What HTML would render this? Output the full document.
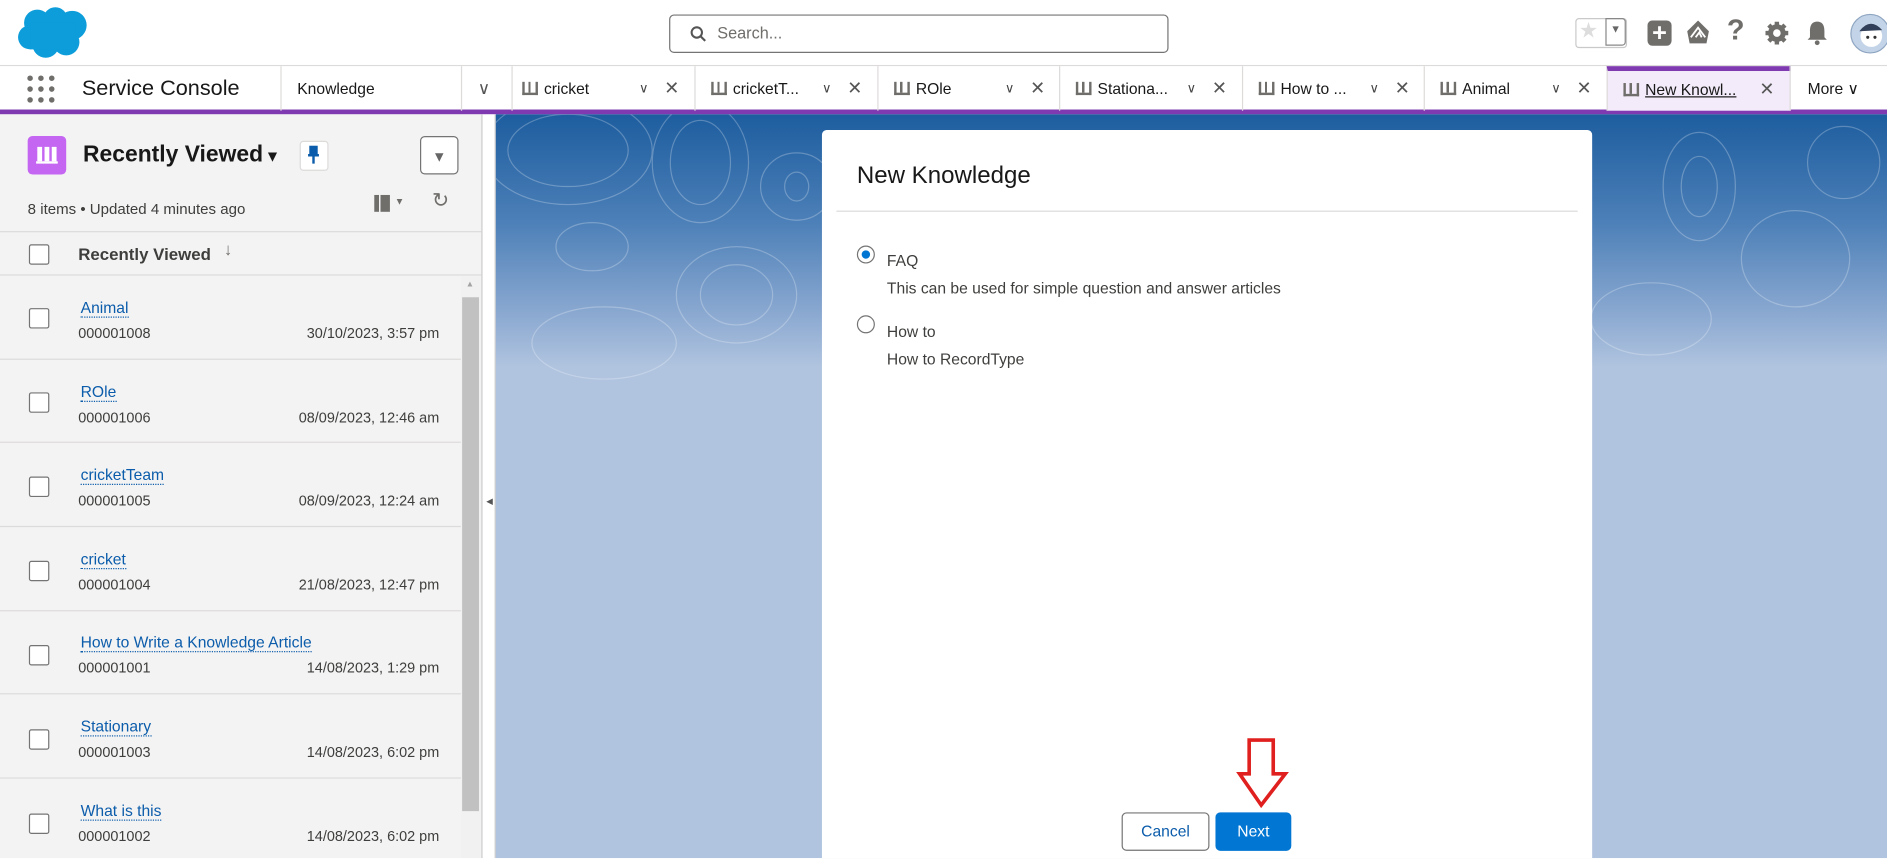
<!DOCTYPE html>
<html><head><meta charset="utf-8"><style>
html,body{margin:0;padding:0;width:1887px;height:858px;overflow:hidden;background:#fff;}
#w{position:absolute;left:0;top:0;width:1568px;height:713px;transform:scale(1.20344);transform-origin:0 0;font-family:"Liberation Sans",sans-serif;color:#181818;}
.a{position:absolute;}
.tab{position:absolute;top:55px;height:37px;border-left:1px solid #dddbda;font-size:13px;line-height:38px;color:#181818;}
.ti{display:inline-block;width:13px;height:11px;border:2px solid #706e6b;border-top:none;vertical-align:-1px;margin-right:5px;box-sizing:border-box;background:linear-gradient(90deg,transparent 3px,#706e6b 3px,#706e6b 5px,transparent 5px) ;}
.chev{position:absolute;top:0;font-size:11px;color:#444;}
.x{position:absolute;top:0;font-size:15px;color:#555;}
.row{position:absolute;left:0;width:383px;height:69px;border-bottom:1px solid #dddbda;}
.cb{position:absolute;left:24px;width:15px;height:15px;border:1px solid #747474;border-radius:2px;background:#fff;}
.nm{position:absolute;left:67px;font-size:13px;color:#0b5cab;border-bottom:1px dotted #0b5cab;line-height:15px;}
.id{position:absolute;left:65px;font-size:12px;color:#3e3e3c;}
.dt{position:absolute;right:18px;font-size:12px;color:#3e3e3c;}
</style></head><body><div id="w">
<!-- header -->
<div class="a" style="left:0;top:0;width:1568px;height:54px;background:#fff;border-bottom:1px solid #dddbda;"></div>
<svg class="a" style="left:13px;top:5px" width="62" height="44" viewBox="0 0 62 44"><g fill="#0d9dda"><circle cx="18" cy="14" r="11"/><circle cx="33" cy="11" r="10"/><circle cx="47" cy="16" r="12"/><circle cx="12" cy="26" r="10"/><circle cx="25" cy="32" r="11"/><circle cx="42" cy="30" r="11"/><rect x="12" y="14" width="38" height="22"/></g></svg>
<div class="a" style="left:556px;top:12px;width:413px;height:30px;border:1px solid #747474;border-radius:4px;background:#fff;"></div>
<svg class="a" style="left:573px;top:21px" width="14" height="14" viewBox="0 0 14 14"><circle cx="6" cy="6" r="4.3" fill="none" stroke="#555" stroke-width="1.7"/><path d="M9 9l4 4" stroke="#555" stroke-width="1.8"/></svg>
<div class="a" style="left:596px;top:20px;font-size:13.5px;color:#706e6b;">Search...</div>
<div class="a" style="left:1309px;top:15px;width:41px;height:23px;border:1px solid #c9c9c9;border-radius:3px;background:#fff;"></div>
<div class="a" style="left:1334px;top:15px;width:17px;height:23px;border:1px solid #888;border-radius:0 3px 3px 0;box-sizing:border-box;"></div>
<div class="a" style="left:1312px;top:15px;font-size:18px;color:#ddd;">★</div>
<div class="a" style="left:1338px;top:19px;font-size:9px;color:#666;">▼</div>
<div class="a" style="left:1369px;top:17px;width:20px;height:21px;background:#706e6b;border-radius:4px;color:#fff;font-size:21px;line-height:21px;text-align:center;font-weight:bold;">+</div>
<svg class="a" style="left:1401px;top:16px" width="20" height="22" viewBox="0 0 20 22"><path d="M10 1 L19 10 L17 20 L3 20 L1 10Z" fill="#706e6b"/><path d="M4 15 L10 7 L16 15 M8 15 L11 11 L13 15" stroke="#fff" stroke-width="1.5" fill="none"/></svg>
<div class="a" style="left:1435px;top:12px;font-size:24px;color:#706e6b;font-weight:bold;">?</div>
<svg class="a" style="left:1466px;top:17px" width="21" height="21" viewBox="0 0 20 20"><circle cx="10" cy="10" r="7" fill="#706e6b"/><g stroke="#706e6b" stroke-width="3.5"><path d="M10 1v18M1 10h18M3.6 3.6l12.8 12.8M16.4 3.6L3.6 16.4"/></g><circle cx="10" cy="10" r="3" fill="#fff"/></svg>
<svg class="a" style="left:1500px;top:16px" width="20" height="22" viewBox="0 0 20 22"><path d="M10 2 C5 2 4 6 4 10 L4 15 L2 17 L18 17 L16 15 L16 10 C16 6 15 2 10 2Z" fill="#706e6b"/><circle cx="10" cy="19.5" r="2" fill="#706e6b"/></svg>
<svg class="a" style="left:1537px;top:10px" width="32" height="36" viewBox="0 0 32 36"><circle cx="17" cy="18" r="16" fill="#c4d4e8" stroke="#8fa6c2"/><circle cx="18" cy="20" r="9" fill="#fff"/><path d="M8 16 Q17 4 27 15" fill="#32405a"/><circle cx="15" cy="21" r="1.3" fill="#333"/><circle cx="21" cy="21" r="1.3" fill="#333"/></svg>
<!-- nav -->
<div class="a" style="left:0;top:55px;width:1568px;height:37px;background:#fff;"></div>
<div class="a" style="left:0;top:91px;width:1568px;height:4px;background:#7f3ab1;"></div>
<svg class="a" style="left:22px;top:62px" width="24" height="24" viewBox="0 0 24 24"><g fill="#706e6b"><circle cx="3" cy="3" r="2.3"/><circle cx="12" cy="3" r="2.3"/><circle cx="21" cy="3" r="2.3"/><circle cx="3" cy="12" r="2.3"/><circle cx="12" cy="12" r="2.3"/><circle cx="21" cy="12" r="2.3"/><circle cx="3" cy="21" r="2.3"/><circle cx="12" cy="21" r="2.3"/><circle cx="21" cy="21" r="2.3"/></g></svg>
<div class="a" style="left:68px;top:63px;font-size:18px;color:#181818;">Service Console</div>
<div class="tab" style="left:233px;width:150px;"><span style="margin-left:13px">Knowledge</span></div>
<div class="tab" style="left:383px;width:42px;"><span style="position:absolute;left:13px;top:-1px;font-size:14px;color:#555;">∨</span></div>
<div class="tab" style="left:425px;width:152px;"><span style="margin-left:8px"><i class="ti"></i>cricket</span><span class="chev" style="left:105px">∨</span><span class="x" style="left:126px">✕</span></div>
<div class="tab" style="left:577px;width:152px;"><span style="margin-left:13px"><i class="ti"></i>cricketT...</span><span class="chev" style="left:105px">∨</span><span class="x" style="left:126px">✕</span></div>
<div class="tab" style="left:729px;width:151px;"><span style="margin-left:13px"><i class="ti"></i>ROle</span><span class="chev" style="left:105px">∨</span><span class="x" style="left:126px">✕</span></div>
<div class="tab" style="left:880px;width:152px;"><span style="margin-left:13px"><i class="ti"></i>Stationa...</span><span class="chev" style="left:105px">∨</span><span class="x" style="left:126px">✕</span></div>
<div class="tab" style="left:1032px;width:151px;"><span style="margin-left:13px"><i class="ti"></i>How to ...</span><span class="chev" style="left:105px">∨</span><span class="x" style="left:126px">✕</span></div>
<div class="tab" style="left:1183px;width:152px;"><span style="margin-left:13px"><i class="ti"></i>Animal</span><span class="chev" style="left:105px">∨</span><span class="x" style="left:126px">✕</span></div>
<div class="tab" style="left:1335px;width:152px;background:#f3ebfa;border-top:4px solid #7f3ab1;top:55px;height:33px;line-height:32px;"><span style="margin-left:13px"><i class="ti"></i><u>New Knowl...</u></span><span class="x" style="left:126px">✕</span></div>
<div class="tab" style="left:1487px;width:81px;"><span style="margin-left:14px">More ∨</span></div>
<!-- left panel -->
<div class="a" style="left:0;top:95px;width:400px;height:618px;background:#f3f3f3;border-right:1px solid #c9c9c9;"></div>
<div class="a" style="left:23px;top:113px;width:32px;height:32px;background:#c466f2;border-radius:4px;"></div>
<svg class="a" style="left:29px;top:119px" width="20" height="20" viewBox="0 0 20 20"><path d="M2 3h4v12h-4zM8 3h4v12h-4zM14 3h4v12h-4z" fill="#fff"/><path d="M1 15h18v2h-18z" fill="#fff"/></svg>
<div class="a" style="left:69px;top:118px;font-size:19px;font-weight:bold;">Recently Viewed</div>
<div class="a" style="left:220px;top:122px;font-size:13px;">▼</div>
<div class="a" style="left:249px;top:117px;width:22px;height:23px;background:#fff;border:1px solid #dddbda;border-radius:3px;"></div>
<svg class="a" style="left:255px;top:121px" width="11" height="16" viewBox="0 0 11 16"><path d="M2 1h7M3 1v6h5v-6M1 8h9M5.5 8v7" stroke="#0b5cab" stroke-width="2" fill="#0b5cab"/></svg>
<div class="a" style="left:349px;top:113px;width:32px;height:32px;background:#fff;border:1px solid #747474;border-radius:4px;box-sizing:border-box;text-align:center;line-height:32px;font-size:12px;color:#666;">▼</div>
<div class="a" style="left:23px;top:167px;font-size:12.5px;color:#3e3e3c;">8 items • Updated 4 minutes ago</div>
<div class="a" style="left:311px;top:162px;width:13px;height:14px;background:linear-gradient(90deg,#706e6b 4px,transparent 4px,transparent 5px,#706e6b 5px);"></div>
<div class="a" style="left:328px;top:163px;font-size:8px;color:#706e6b;">▼</div>
<div class="a" style="left:359px;top:157px;font-size:17px;color:#706e6b;">↻</div>
<div class="a" style="left:0;top:192px;width:400px;height:37px;border-top:1px solid #dddbda;border-bottom:1px solid #dddbda;box-sizing:border-box;"></div>
<div class="cb" style="top:203px;"></div>
<div class="a" style="left:65px;top:203px;font-size:14px;font-weight:bold;color:#3e3e3c;">Recently Viewed</div>
<div class="a" style="left:186px;top:199px;font-size:14px;color:#706e6b;">↓</div>
<div class="row" style="top:229px"><div class="cb" style="top:27px"></div><div class="nm" style="top:19px">Animal</div><div class="id" style="top:41px">000001008</div><div class="dt" style="top:41px">30/10/2023, 3:57 pm</div></div>
<div class="row" style="top:298px"><div class="cb" style="top:28px"></div><div class="nm" style="top:20px">ROle</div><div class="id" style="top:42px">000001006</div><div class="dt" style="top:42px">08/09/2023, 12:46 am</div></div>
<div class="row" style="top:368px"><div class="cb" style="top:28px"></div><div class="nm" style="top:19px">cricketTeam</div><div class="id" style="top:41px">000001005</div><div class="dt" style="top:41px">08/09/2023, 12:24 am</div></div>
<div class="row" style="top:438px"><div class="cb" style="top:28px"></div><div class="nm" style="top:19px">cricket</div><div class="id" style="top:41px">000001004</div><div class="dt" style="top:41px">21/08/2023, 12:47 pm</div></div>
<div class="row" style="top:507px"><div class="cb" style="top:29px"></div><div class="nm" style="top:19px">How to Write a Knowledge Article</div><div class="id" style="top:41px">000001001</div><div class="dt" style="top:41px">14/08/2023, 1:29 pm</div></div>
<div class="row" style="top:577px"><div class="cb" style="top:29px"></div><div class="nm" style="top:19px">Stationary</div><div class="id" style="top:41px">000001003</div><div class="dt" style="top:41px">14/08/2023, 6:02 pm</div></div>
<div class="row" style="top:647px;border-bottom:none"><div class="cb" style="top:29px"></div><div class="nm" style="top:19px">What is this</div><div class="id" style="top:41px">000001002</div><div class="dt" style="top:41px">14/08/2023, 6:02 pm</div></div>
<div class="a" style="left:383px;top:230px;width:16px;height:483px;background:#f1f1f1;"></div>
<div class="a" style="left:387px;top:233px;font-size:7px;color:#a3a3a3;">▲</div>
<div class="a" style="left:384px;top:247px;width:14px;height:427px;background:#c1c1c1;"></div>
<div class="a" style="left:401px;top:95px;width:11px;height:618px;background:#fff;border-right:1px solid #c9c9c9;box-sizing:border-box;"></div>
<div class="a" style="left:404px;top:413px;font-size:7px;color:#555;">◀</div>
<!-- main bg -->
<div class="a" style="left:412px;top:95px;width:1156px;height:618px;background:linear-gradient(180deg,#1d5d9f 0px,#4d80b8 90px,#8eabd2 170px,#b0c4df 210px,#b0c4df 618px);overflow:hidden;">
<svg width="1156" height="230" style="opacity:.25"><g fill="none" stroke="#fff" stroke-width="1"><ellipse cx="60" cy="30" rx="50" ry="30"/><ellipse cx="60" cy="30" rx="70" ry="45"/><ellipse cx="170" cy="40" rx="40" ry="50"/><ellipse cx="170" cy="40" rx="25" ry="35"/><ellipse cx="250" cy="60" rx="30" ry="28"/><ellipse cx="250" cy="60" rx="10" ry="12"/><ellipse cx="80" cy="110" rx="30" ry="20"/><ellipse cx="200" cy="150" rx="50" ry="40"/><ellipse cx="200" cy="150" rx="30" ry="25"/><ellipse cx="90" cy="190" rx="60" ry="30"/><ellipse cx="1000" cy="60" rx="30" ry="45"/><ellipse cx="1000" cy="60" rx="15" ry="25"/><ellipse cx="1080" cy="120" rx="45" ry="40"/><ellipse cx="1120" cy="40" rx="30" ry="30"/><ellipse cx="960" cy="170" rx="50" ry="30"/></g></svg></div>
<!-- modal -->
<div class="a" style="left:683px;top:108px;width:640px;height:605px;background:#fff;border-radius:4px 4px 0 0;"></div>
<div class="a" style="left:712px;top:135px;font-size:20px;color:#181818;">New Knowledge</div>
<div class="a" style="left:695px;top:175px;width:616px;height:1px;background:#dddbda;"></div>
<div class="a" style="left:712px;top:204px;width:15px;height:15px;border:1px solid #747474;border-radius:50%;box-sizing:border-box;"></div>
<div class="a" style="left:716px;top:208px;width:7px;height:7px;background:#0176d3;border-radius:50%;"></div>
<div class="a" style="left:737px;top:209px;font-size:13px;color:#3e3e3c;">FAQ</div>
<div class="a" style="left:737px;top:232px;font-size:13px;color:#3e3e3c;">This can be used for simple question and answer articles</div>
<div class="a" style="left:712px;top:262px;width:15px;height:15px;border:1px solid #747474;border-radius:50%;box-sizing:border-box;"></div>
<div class="a" style="left:737px;top:268px;font-size:13px;color:#3e3e3c;">How to</div>
<div class="a" style="left:737px;top:291px;font-size:13px;color:#3e3e3c;">How to RecordType</div>
<div class="a" style="left:932px;top:675px;width:73px;height:32px;border:1px solid #747474;border-radius:4px;box-sizing:border-box;text-align:center;line-height:30px;font-size:13px;color:#0b5cab;">Cancel</div>
<div class="a" style="left:1010px;top:675px;width:63px;height:32px;background:#0176d3;border-radius:4px;text-align:center;line-height:32px;font-size:13px;color:#fff;">Next</div>
<svg class="a" style="left:1022px;top:612px" width="56" height="62" viewBox="0 0 56 62"><path d="M10 3 H30 V31 H40 L20 57 L2 31 H10 Z" transform="translate(6,0)" fill="none" stroke="#e0201e" stroke-width="3"/></svg>
</div></body></html>
